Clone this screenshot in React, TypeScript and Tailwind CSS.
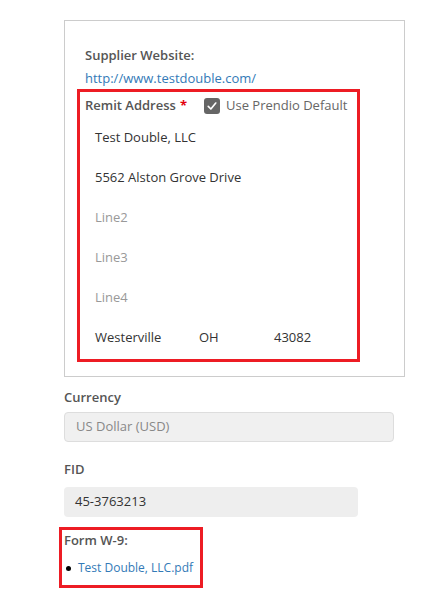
const font = { fontFamily: '"Open Sans", "Noto Sans", sans-serif' };

function AddressLine({ text, placeholder }: { text?: string; placeholder?: string }) {
  return (
    <div className="flex h-[40px] items-center pl-[15px] text-[13px]">
      {text ? (
        <span className="text-[#333]">{text}</span>
      ) : (
        <span className="text-[#999]">{placeholder}</span>
      )}
    </div>
  );
}

export default function App() {
  return (
    <div className="min-h-[602px] w-[438px] bg-white" style={font}>
      <div className="h-[20px]" />
      <div className="ml-[64px] h-[357px] w-[341px] border border-[#ccc]">
        <div className="pl-[20px] pt-[25px]">
          <div className="flex h-[20px] items-center text-[13px] font-semibold text-[#555]">
            Supplier Website:
          </div>
          <div className="flex h-[23px] items-center pt-[3px] text-[13px] text-[#337ab7]">
            http://www.testdouble.com/
          </div>
        </div>
        <div className="ml-[12px] h-[273px] w-[283px] border-[3px] border-[#ed1c24]">
          <div className="flex h-[26px] items-center pl-[5px] pt-[1px] text-[13px]">
            <span className="font-semibold text-[#555]">Remit Address</span>
            <span className="ml-[4px] font-bold text-[#e3000f]">*</span>
            <span className="ml-[17px] flex h-[16px] w-[16px] items-center justify-center rounded-[3px] bg-[#666]">
              <svg viewBox="0 0 16 16" className="h-[12px] w-[12px]">
                <path d="M3 8.5 L6.5 12 L13 4" fill="none" stroke="white" strokeWidth="2.2" strokeLinecap="round" strokeLinejoin="round" />
              </svg>
            </span>
            <span className="ml-[6px] text-[#666]">Use Prendio Default</span>
          </div>
          <AddressLine text="Test Double, LLC" />
          <AddressLine text="5562 Alston Grove Drive" />
          <AddressLine placeholder="Line2" />
          <AddressLine placeholder="Line3" />
          <AddressLine placeholder="Line4" />
          <div className="flex h-[40px] items-center pl-[15px] text-[13px] text-[#333]">
            <span className="w-[104px]">Westerville</span>
            <span className="w-[75px]">OH</span>
            <span>43082</span>
          </div>
        </div>
      </div>

      <div className="ml-[64px] mt-[11px]">
        <div className="flex h-[20px] items-center text-[13px] font-semibold text-[#555]">Currency</div>
        <div className="mt-[4px] flex h-[30px] w-[330px] items-center rounded-[4px] border border-[#ddd] bg-[#f0f0f0] pl-[11px] text-[13px] text-[#888]">
          US Dollar (USD)
        </div>
        <div className="mt-[18px] flex h-[20px] items-center text-[13px] font-semibold text-[#555]">FID</div>
        <div className="mt-[7px] flex h-[30px] w-[294px] items-center rounded-[4px] bg-[#eee] pl-[11px] text-[13px] text-[#333]">
          45-3763213
        </div>
      </div>

      <div className="ml-[59px] mt-[10px] h-[61px] w-[144px] border-[3px] border-[#ed1c24] pl-[2px]">
        <div className="flex h-[20px] items-center pt-[2px] text-[13px] font-semibold text-[#555]">Form W-9:</div>
        <div className="mt-[8px] flex h-[20px] items-center text-[12px]">
          <span className="ml-[2px] h-[5px] w-[5px] rounded-full bg-black" />
          <span className="ml-[7px] text-[#337ab7]">Test Double, LLC.pdf</span>
        </div>
      </div>
    </div>
  );
}
